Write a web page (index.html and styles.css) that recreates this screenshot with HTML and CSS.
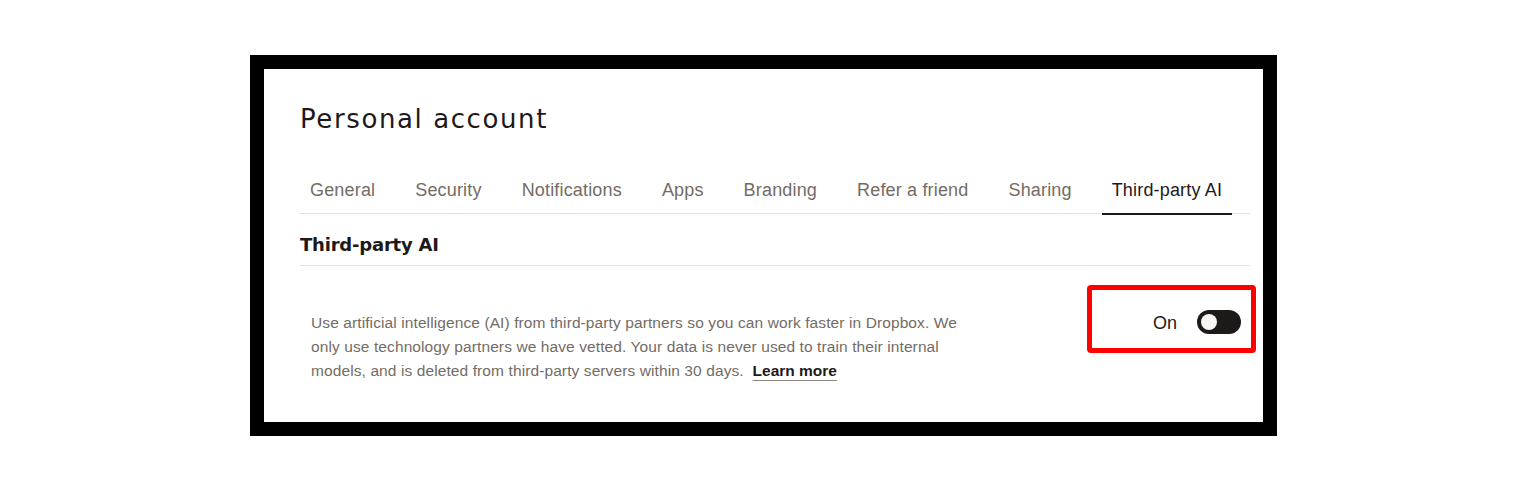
FILE: index.html
```html
<!DOCTYPE html>
<html lang="en">
<head>
<meta charset="utf-8">
<title>Personal account</title>
<link rel="stylesheet" href="styles.css">
</head>
<body>
<div class="frame">
  <div class="card">
    <h1 class="page-title">Personal account</h1>
    <nav class="tabs">
      <span class="tab">General</span>
      <span class="tab">Security</span>
      <span class="tab">Notifications</span>
      <span class="tab">Apps</span>
      <span class="tab">Branding</span>
      <span class="tab">Refer a friend</span>
      <span class="tab">Sharing</span>
      <span class="tab active">Third-party AI</span>
    </nav>
    <h2 class="section-title">Third-party AI</h2>
    <div class="setting-row">
      <p class="desc">Use artificial intelligence (AI) from third-party partners so you can work faster in Dropbox. We only use technology partners we have vetted. Your data is never used to train their internal models, and is deleted from third-party servers within 30 days.&nbsp; <a class="learn" href="#">Learn more</a></p>
      <div class="toggle-group">
        <span class="toggle-label">On</span>
        <span class="switch"><span class="knob"></span></span>
      </div>
    </div>
    <div class="highlight"></div>
  </div>
</div>
</body>
</html>
```
FILE: styles.css
```css
html, body {
  margin: 0;
  padding: 0;
  background: #ffffff;
}

.frame {
  box-sizing: border-box;
  width: 1027px;
  height: 381px;
  margin: 55px 0 0 250px;
  border: 14px solid #000000;
  background: #ffffff;
}

.card {
  position: relative;
  box-sizing: border-box;
  height: 100%;
  padding: 34px 13px 0 36px;
}

.page-title {
  margin: 0;
  font-family: "DejaVu Sans", sans-serif;
  font-weight: normal;
  font-size: 26px;
  line-height: 32px;
  letter-spacing: 1.6px;
  color: #1e1919;
}

.tabs {
  display: flex;
  gap: 20px;
  margin-top: 43px;
  border-bottom: 1px solid #e4e1dd;
}

.tab {
  padding: 0 10px 11px;
  margin-bottom: -2px;
  border-bottom: 2px solid transparent;
  font-family: "Liberation Sans", Arial, sans-serif;
  font-size: 18px;
  line-height: 24px;
  letter-spacing: 0.17px;
  color: #736c64;
  white-space: nowrap;
}

.tab.active {
  color: #1e1919;
  border-bottom-color: #1e1919;
}

.section-title {
  margin: 19px 0 0;
  padding-bottom: 8px;
  border-bottom: 1px solid #e4e1dd;
  font-family: "DejaVu Sans", sans-serif;
  font-weight: bold;
  font-size: 18px;
  line-height: 24px;
  letter-spacing: -0.2px;
  color: #1e1919;
}

.setting-row {
  display: flex;
  justify-content: space-between;
  align-items: flex-start;
  padding: 42px 9px 0 11px;
}

.desc {
  width: 670px;
  margin: 3px 0 0;
  font-family: "Liberation Sans", Arial, sans-serif;
  font-size: 15.5px;
  line-height: 24px;
  letter-spacing: 0.1px;
  color: #736c64;
}

.learn {
  color: #1e1919;
  font-weight: bold;
  letter-spacing: 0;
  text-decoration: underline;
  text-decoration-color: #8c8580;
  text-decoration-thickness: 1px;
  text-underline-offset: 4px;
}

.toggle-group {
  display: flex;
  align-items: center;
  gap: 20px;
}

.toggle-label {
  font-family: "Liberation Sans", Arial, sans-serif;
  font-size: 18px;
  line-height: 24px;
  padding-top: 3px;
  color: #1e1919;
}

.switch {
  box-sizing: border-box;
  display: flex;
  align-items: center;
  width: 44px;
  height: 24px;
  padding: 0 4px;
  border-radius: 12px;
  background: #1e1919;
}

.knob {
  width: 16px;
  height: 16px;
  border-radius: 50%;
  background: #f7f5f2;
}

.highlight {
  position: absolute;
  box-sizing: border-box;
  left: 823px;
  top: 216px;
  width: 169px;
  height: 68px;
  border: 5px solid #ff0000;
  border-radius: 4px;
}
```
